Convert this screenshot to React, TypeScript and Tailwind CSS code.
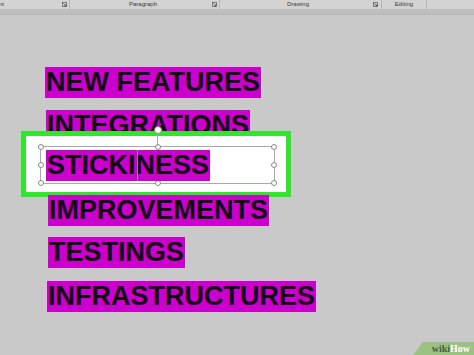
import React from 'react';

const items = [
  { label: 'NEW FEATURES', ml: 'ml-[45px]', mt: 'mt-0' },
  { label: 'INTEGRATIONS', ml: 'ml-[46px]', mt: 'mt-[12px]' },
  { label: 'STICKINESS', ml: 'ml-[46px]', mt: 'mt-[9px]', selected: true },
  { label: 'IMPROVEMENTS', ml: 'ml-[48px]', mt: 'mt-[14px]' },
  { label: 'TESTINGS', ml: 'ml-[48px]', mt: 'mt-[11px]' },
  { label: 'INFRASTRUCTURES', ml: 'ml-[47px]', mt: 'mt-[13px]' },
];

function Launcher() {
  return (
    <svg width="5" height="5" viewBox="0 0 5 5" className="shrink-0">
      <rect x="0.5" y="0.5" width="4" height="4" fill="none" stroke="#666" strokeWidth="0.8" />
      <path d="M1.5 1.5 L4 4 M2.5 4 H4 V2.5" stroke="#444" strokeWidth="0.8" fill="none" />
    </svg>
  );
}

function Handle({ className }: { className: string }) {
  return (
    <div
      className={`absolute w-[6px] h-[6px] -ml-[3px] -mt-[3px] rounded-full border border-[#8a8a8a] bg-white ${className}`}
    />
  );
}

function Ribbon() {
  return (
    <div className="flex flex-col">
      <div className="flex h-[9px] bg-[#d3d3d3] text-[6px] leading-[9px] text-[#3a3a3a]">
        <div className="flex w-[70px] items-center justify-between border-r border-[#b8b8b8] pr-[2px]">
          <span className="-ml-[1px]">nt</span>
          <Launcher />
        </div>
        <div className="flex w-[150px] items-center border-r border-[#b8b8b8] pr-[2px]">
          <span className="ml-[59px]">Paragraph</span>
          <span className="flex-1" />
          <Launcher />
        </div>
        <div className="flex w-[162px] items-center border-r border-[#b8b8b8] pr-[3px]">
          <span className="ml-[67px]">Drawing</span>
          <span className="flex-1" />
          <Launcher />
        </div>
        <div className="flex w-[45px] items-center justify-center border-r border-[#b8b8b8]">
          <span>Editing</span>
        </div>
        <div className="flex-1" />
      </div>
      <div className="h-[5px] bg-[#bebebe]" />
      <div className="h-px bg-[#b4b4b4]" />
    </div>
  );
}

export default function App() {
  return (
    <div
      className="relative w-[474px] h-[355px] overflow-hidden bg-[#c9c9c9]"
      style={{ fontFamily: '"Liberation Sans", Arial, sans-serif' }}
    >
      <Ribbon />

      <div className="mt-[52px] flex flex-col">
        {items.map((it) => (
          <div key={it.label} className={`relative h-[31px] ${it.mt}`}>
            {it.selected && (
              <>
                {/* green annotation frame */}
                <div className="absolute left-[21px] top-[-19px] w-[270px] h-[66px] border-[5px] border-[#31e52c] bg-white" />
                {/* text box selection */}
                <div className="absolute left-[40px] top-[-4px] w-[235px] h-[38px] border border-[#a8a8a8]">
                  <Handle className="left-0 top-0" />
                  <Handle className="left-1/2 top-0" />
                  <Handle className="left-full top-0" />
                  <Handle className="left-0 top-1/2" />
                  <Handle className="left-full top-1/2" />
                  <Handle className="left-0 top-full" />
                  <Handle className="left-1/2 top-full" />
                  <Handle className="left-full top-full" />
                </div>
                <div className="absolute left-[157px] top-[-18px] w-px h-[14px] bg-[#a8a8a8]" />
                <div className="absolute left-[154px] top-[-24px] w-[8px] h-[8px] rounded-full border border-[#8a8a8a] bg-white" />
              </>
            )}
            <span
              className={`relative inline-block ${it.ml} bg-[#cc00cc] px-[1px] text-[27px] font-bold leading-[31px] text-[#120812]`}
            >
              {it.label}
              {it.selected && (
                <span className="absolute left-[91px] top-0 w-px h-[31px] bg-[#a070a8]" />
              )}
            </span>
          </div>
        ))}
      </div>

      {/* wikiHow watermark */}
      <div
        className="absolute right-0 bottom-0 w-[61px] h-[13px] bg-[#9cc283] flex items-end justify-end pr-[4px]"
        style={{ clipPath: 'polygon(10px 0, 100% 0, 100% 100%, 0 100%)' }}
      >
        <span
          className="text-[10px] font-bold leading-[12px]"
          style={{ fontFamily: '"Liberation Serif", "Times New Roman", serif' }}
        >
          <span className="text-[#4b5d3c]">wiki</span>
          <span className="text-white">How</span>
        </span>
      </div>
    </div>
  );
}
